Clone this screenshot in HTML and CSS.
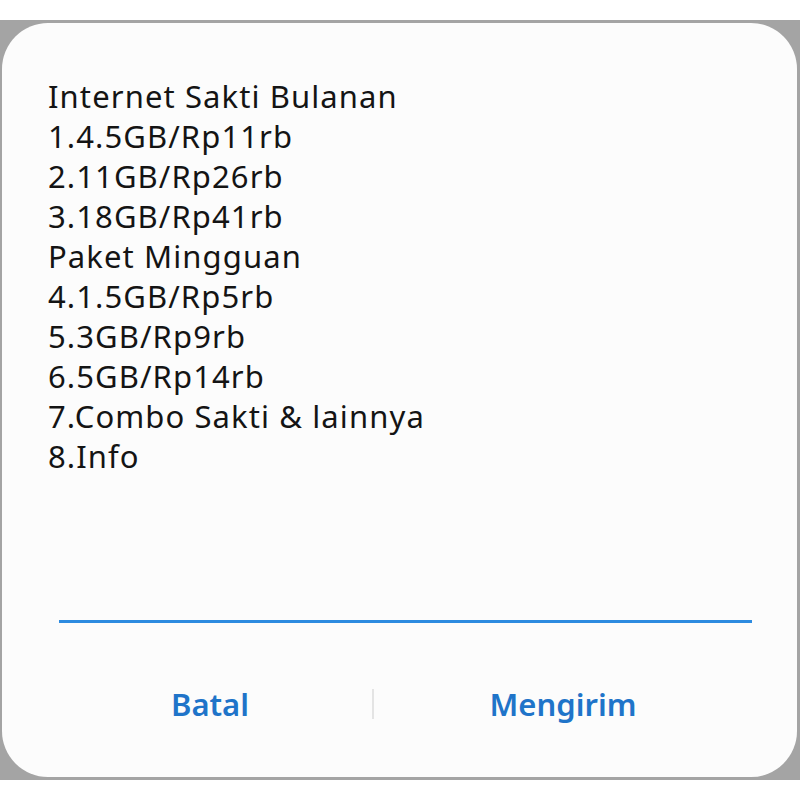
FILE: index.html
```html
<!DOCTYPE html>
<html lang="id">
  <head>
    <meta charset="UTF-8" />
    <meta name="viewport" content="width=device-width, initial-scale=1.0" />
    <title>USSD</title>
    <link rel="stylesheet" href="styles.css">
  </head>
  <body>
    <div class="screen">
      <div class="dialog">
        <div class="message">
          <p>Internet Sakti Bulanan</p>
          <p>1.4.5GB/Rp11rb</p>
          <p>2.11GB/Rp26rb</p>
          <p>3.18GB/Rp41rb</p>
          <p>Paket Mingguan</p>
          <p>4.1.5GB/Rp5rb</p>
          <p>5.3GB/Rp9rb</p>
          <p>6.5GB/Rp14rb</p>
          <p>7.Combo Sakti &amp; lainnya</p>
          <p>8.Info</p>
        </div>
        <div class="reply">
          <div class="reply-line"></div>
        </div>
        <div class="button-group">
          <button class="cancel-button">Batal</button>
          <span class="divider"></span>
          <button class="send-button">Mengirim</button>
        </div>
      </div>
    </div>
  </body>
</html>
```

FILE: styles.css
```css
body {
  margin: 0;
  background-color: #ffffff;
  font-family: "Noto Sans", "DejaVu Sans", sans-serif;
}
.screen {
  margin-top: 20px;
  height: 760px;
  box-sizing: border-box;
  padding: 3px 3px 3px 2px;
  background-color: #a4a4a4;
}
.dialog {
  height: 100%;
  box-sizing: border-box;
  border-radius: 46px;
  background-color: #fcfcfc;
  display: flex;
  flex-direction: column;
  padding-top: 53px;
}
.message {
  padding-left: 46px;
  color: #141414;
  font-size: 31px;
  letter-spacing: 1.1px;
  line-height: 40px;
}
.message p {
  margin: 0;
}
.reply {
  margin-top: auto;
  padding: 0 45px 0 57px;
}
.reply-line {
  height: 3px;
  background-color: #2d8be0;
}
.button-group {
  display: flex;
  align-items: center;
  height: 154px;
  padding: 8px 45px 0 46px;
  box-sizing: border-box;
}
.button-group button {
  border: none;
  background: none;
  font-family: "Noto Sans", "DejaVu Sans", sans-serif;
  font-size: 31px;
  font-weight: 600;
  color: #1f74c9;
  cursor: pointer;
  padding: 10px 0;
}
.cancel-button {
  flex: 0 0 324px;
}
.send-button {
  flex: 1;
}
.divider {
  width: 2px;
  height: 30px;
  background-color: #e4e4e4;
}
```
